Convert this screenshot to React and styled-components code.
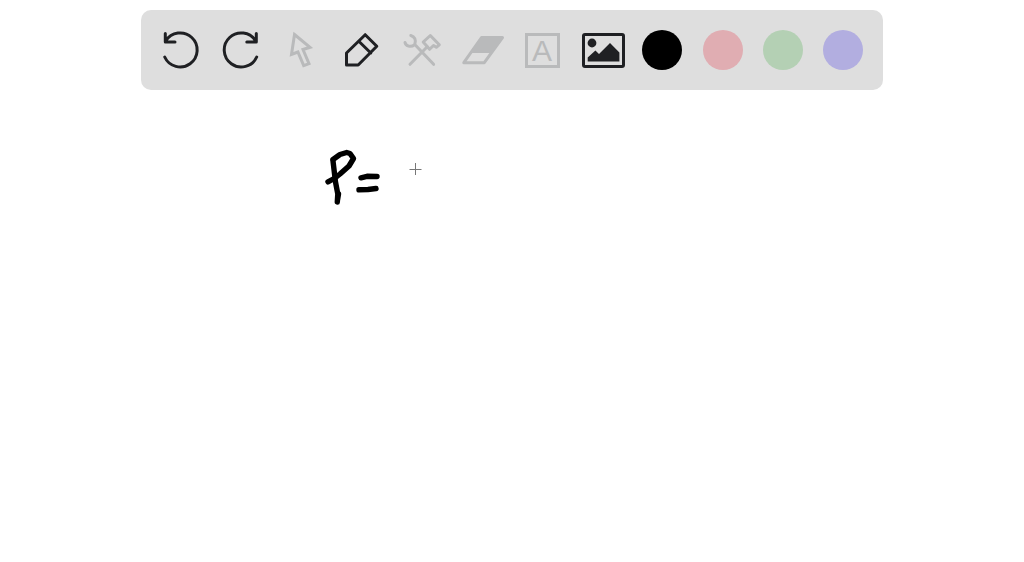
import React, { useState } from 'react'
import styled, { createGlobalStyle } from 'styled-components';

const GlobalStyle = createGlobalStyle`
    body {
        margin: 0;
        background: white;
        font-family: "Liberation Sans", Arial, sans-serif;
    }
`
const Page = styled.main`
    box-sizing: border-box;
    min-height: 100vh;
    padding-top: 10px;
    display: flex;
    flex-direction: column;
    align-items: center;
`
const Toolbar = styled.div`
    box-sizing: border-box;
    width: 100%;
    max-width: 742px;
    height: 80px;
    padding: 0 18px;
    display: flex;
    align-items: center;
    justify-content: space-between;
    background: #dedede;
    border-radius: 10px;
`
const ToolButton = styled.button`
    width: 44px;
    height: 44px;
    padding: 0;
    border: none;
    background: none;
    display: flex;
    align-items: center;
    justify-content: center;
    color: ${props => props.$muted ? '#b9babb' : '#1f2023'};
    cursor: pointer;
`
const Icon = styled.svg`
    width: 44px;
    height: 44px;
    flex: none;
    overflow: visible;
    fill: none;
    stroke: currentColor;
    stroke-width: 3px;
    stroke-linejoin: ${props => props.$round ? 'round' : 'miter'};
    stroke-linecap: ${props => props.$round ? 'round' : 'butt'};
    .solid {
        fill: currentColor;
        stroke: none;
    }
`
const LetterBox = styled.span`
    box-sizing: border-box;
    width: 35px;
    height: 35px;
    border: 3px solid currentColor;
    font-size: 30px;
    line-height: 30px;
    text-align: center;
`
const Swatch = styled.button`
    width: 40px;
    height: 40px;
    margin: 0 2px;
    padding: 0;
    border: none;
    border-radius: 50%;
    background: ${props => props.$color};
    cursor: pointer;
`
const Board = styled.svg`
    width: 100%;
    flex: 1;
    display: block;
    fill: none;
    stroke-linecap: round;
    stroke-linejoin: round;
    cursor: crosshair;
    .cursor {
        stroke: #777;
        stroke-width: 1px;
        stroke-linecap: butt;
    }
`

const tools = [
    { name: 'Undo', round: true, icon: <path d="M6.7 13A17 17 0 1 1 5.7 29M6.3 5.5V14H16" /> },
    { name: 'Redo', round: true, icon: <path d="M36.7 13A17 17 0 1 0 37.7 29M37.3 5.5V14H27.8" /> },
    { name: 'Select', muted: true, icon: <path d="M15.5 6.5L31 19.3L24 21.5L30 35.7L24.7 37.7L18.9 24L12.5 26.5Z" /> },
    { name: 'Pen', round: true, icon: <path d="M25.2 6.7L36.8 18.3L18.2 37H6.5V25ZM18.8 13.3L30.8 25" /> },
    {
        name: 'Tools', muted: true, round: true, icon: <>
            <path d="M10.8 7.5C14.5 8.5 16.5 12 14.8 16.5L33.6 36.3M5 14.5C6 18 10.5 20 14.8 16.5" />
            <path d="M10 36.3L27.5 18.5M23.2 14L30.3 7.5L39.3 16.8L36.3 19.3L33.5 17.5L29.6 21.3Z" />
        </>
    },
    {
        name: 'Eraser', muted: true, round: true, icon: <>
            <path d="M21.5 9.5H42.5L24.3 34.7H3.8Z" />
            <path className="solid" d="M21.5 9H43L32 25H10Z" />
        </>
    },
    { name: 'Text', muted: true, letter: 'A' },
    {
        name: 'Image', round: true, icon: <>
            <rect x="3.5" y="6.5" width="40" height="32" rx="1.5" />
            <circle className="solid" cx="12" cy="15" r="4.4" />
            <path className="solid" d="M7.7 33.5V29.5L15.4 22.5L19 26L30 15L39.4 24.5V33.5Z" />
        </>
    },
]

const colors = [
    { name: 'Black', value: '#000000' },
    { name: 'Red', value: '#e0adb2' },
    { name: 'Green', value: '#b4d0b4' },
    { name: 'Purple', value: '#b2aee0' },
]

const strokes = [
    'M333 71L335.5 92L337.8 104L337.3 112M338.5 104L337.5 110',
    'M333 69.5L340 64.5L346.7 62.5L350 63.5L353.5 68.5L349 76L340 84L335 88L328 91.8',
    'M361 87.8L367 86.3L377 86.5',
    'M359 99.8L368 99.5L376 98.5',
]

export default function App() {
    const [color, setColor] = useState('#000000')
    return (
        <Page>
            <GlobalStyle />
            <Toolbar role="toolbar" aria-label="Drawing tools">
                {tools.map(t => (
                    <ToolButton key={t.name} type="button" aria-label={t.name} $muted={t.muted}>
                        {t.letter
                            ? <LetterBox>{t.letter}</LetterBox>
                            : <Icon viewBox="0 0 44 44" $round={t.round} aria-hidden="true">{t.icon}</Icon>}
                    </ToolButton>
                ))}
                {colors.map(c => (
                    <Swatch key={c.name} type="button" aria-label={c.name} $color={c.value} onClick={() => setColor(c.value)} />
                ))}
            </Toolbar>
            <Board role="img" aria-label="Whiteboard" stroke={color} strokeWidth="5.4">
                {strokes.map(d => <path key={d} d={d} />)}
                <path className="cursor" d="M409.5 79.5H421.5M415.5 73V85" />
            </Board>
        </Page>
    )
}
